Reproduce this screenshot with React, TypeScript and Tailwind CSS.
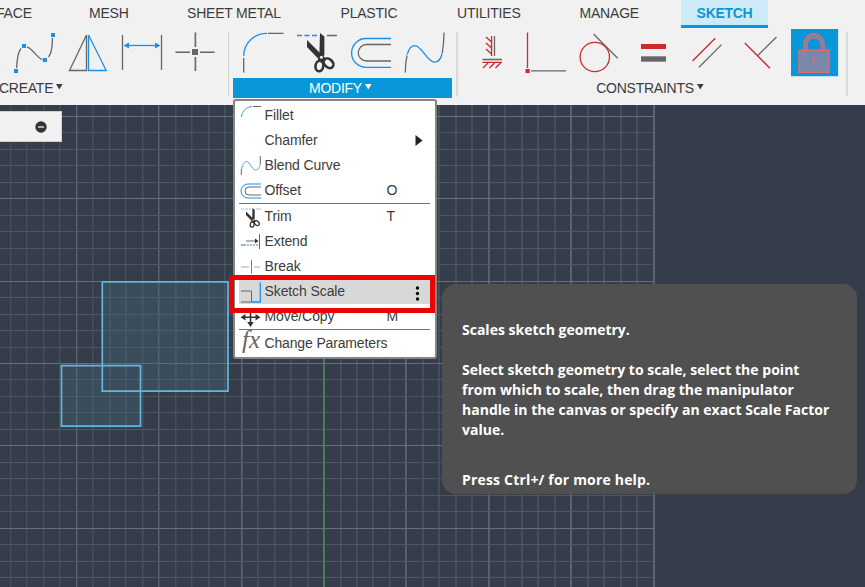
import React, { useState } from 'react';

const TABS = [
  { name: 'FACE', pos: 'w-[73px] -indent-1' },
  { name: 'MESH', pos: 'w-[98px] pl-4' },
  { name: 'SHEET METAL', pos: 'w-[154px] pl-4' },
  { name: 'PLASTIC', pos: 'w-[116px] pl-[15.5px]' },
  { name: 'UTILITIES', pos: 'w-[123px] pl-4' },
  { name: 'MANAGE', pos: 'w-[117px] pl-[15.5px]' },
];

// Every toolbar icon is drawn in toolbar coordinates, x is the left edge of its cell
const ToolIcon = ({ x, w, children }: { x: number; w: number; children: React.ReactNode }) => (
  <svg width={w} height={50} viewBox={`${x} 28 ${w} 50`} fill="none" stroke="#666" strokeWidth="1.3" className="block shrink-0">
    {children}
  </svg>
);

const Scissors = () => (
  <g stroke="none" fill="#333">
    <path d="M320 33L324.4 36.5V55L322 58.5L319.4 55Z" />
    <path d="M307 40L321 54L322.5 58L319 59.5L307 47Z" />
    <path d="M318 57L321.5 54.5L326.5 59L322.5 62.5L318 61.5Z" />
    <circle cx="321.4" cy="57.2" r="1.5" fill="#eee" />
    <g fill="none" stroke="#333" strokeWidth="2.6">
      <ellipse cx="319.4" cy="66" rx="3.9" ry="5.3" transform="rotate(8 319.4 66)" />
      <ellipse cx="328.6" cy="63.3" rx="5.5" ry="4" transform="rotate(45 328.6 63.3)" />
    </g>
  </g>
);

const CreateTools = () => (
  <div className="flex pl-[10px]">
    <ToolIcon x={10} w={50}>
      <path d="M16.6 68C17 60 18 52 21 48.5M27 46.8C33 48.5 37 58.5 42.5 59.6M48.5 57C51.3 54 52.3 47 52.5 38" />
      <path fill="#1b90ea" stroke="none" d="M14 69h4v4h-4zM22 44h4v4h-4zM43 58h4v4h-4zM51 33h4v4h-4z" />
    </ToolIcon>
    <ToolIcon x={60} w={54}>
      <path d="M86.5 35V70.5H69.5L86.5 35" />
      <path stroke="#1b90ea" d="M88.5 35V70.5H106.2L88.5 35" />
    </ToolIcon>
    <ToolIcon x={114} w={56}>
      <path d="M122.5 35V70M161.5 35V70" />
      <path stroke="#1b90ea" d="M126 45.5H158" />
      <path fill="#1b90ea" stroke="none" d="M123.5 45.5L129 42.5V48.5ZM160.5 45.5L155 42.5V48.5Z" />
    </ToolIcon>
    <ToolIcon x={170} w={56}>
      <path d="M195.4 32.5V47M195.4 57V71M175.5 52.3H190M200 52.3H214.5" strokeWidth="1.6" />
      <path fill="#666" stroke="none" d="M192 49h6v6h-6z" />
    </ToolIcon>
  </div>
);

const ModifyTools = () => (
  <div className="flex">
    <ToolIcon x={233} w={56}>
      <path stroke="#1b90ea" d="M243.7 56A23 23 0 0 1 267 33.3" />
      <path d="M243.7 58V72.5M268 33.3H283.5" />
    </ToolIcon>
    <ToolIcon x={289} w={56}>
      <path stroke="#1b90ea" strokeWidth="1.5" d="M297 35.5H302M304.5 35.5H309.5M312 35.5H317" />
      <path strokeWidth="1.5" d="M327 35.5H337" />
      <Scissors />
    </ToolIcon>
    <ToolIcon x={345} w={52}>
      <path stroke="#1b90ea" d="M391 38.5H366A14.4 14.4 0 0 0 366 67.3H391" />
      <path d="M391 44.5H366.5A8.2 8.2 0 0 0 366.5 61H391" />
    </ToolIcon>
    <ToolIcon x={397} w={55}>
      <path d="M405.3 72.5C405.3 66 406 60 407 55.5M442.3 53C443.3 47 443.9 40 444 32.5" />
      <path stroke="#1b90ea" d="M407.2 54.5C409 48 412 45.5 415 45.6C422 46 427 62 434.5 62.2C438.5 62.2 441 58 442.2 53.5" />
    </ToolIcon>
  </div>
);

const ConstraintTools = () => (
  <div className="flex">
    <ToolIcon x={458} w={56}>
      <path stroke="#cc2929" d="M491.6 36V56M486 37L491.5 42M486 43L491.5 48M486 49L491.5 54M482.5 62.4H502M483 68L488 63M489.5 68L494.5 63M495.5 68L500.5 63" />
      <path d="M494.5 36V56M482.5 59.5H502" />
    </ToolIcon>
    <ToolIcon x={514} w={56}>
      <path stroke="#cc2929" d="M527.5 32.5V68" />
      <path fill="#cc2929" stroke="none" d="M525.5 69h4.2v4h-4.2z" />
      <path d="M531 70.8H566" />
    </ToolIcon>
    <ToolIcon x={570} w={56}>
      <circle cx="594.8" cy="57" r="14.7" stroke="#cc2929" />
      <path d="M593.5 34L617.7 58.3" />
    </ToolIcon>
    <ToolIcon x={626} w={56}>
      <path stroke="none" fill="#cc2929" d="M641 44h25v5h-25z" />
      <path stroke="none" fill="#666" d="M641 56.3h25v5.4h-25z" />
    </ToolIcon>
    <ToolIcon x={682} w={54}>
      <path stroke="#cc2929" d="M692.5 61L715.2 38.3" />
      <path d="M699 67.3L721.5 44.6" />
    </ToolIcon>
    <ToolIcon x={736} w={55}>
      <path d="M757.8 55.5L776.5 37" />
      <path stroke="#cc2929" d="M744.8 43L770 68.3" />
    </ToolIcon>
    <ToolIcon x={791} w={48}>
      <path stroke="none" fill="#b9def2" d="M790 29h48.5v48h-48.5z" />
      <path stroke="none" fill="#0a97da" d="M791 29h47v47h-47z" />
      <path stroke="#7a88a8" strokeWidth="2.5" d="M805.2 50V44A8.9 8.9 0 0 1 823 44V50" />
      <path stroke="#e06a6c" d="M804 50V44A10 10 0 0 1 824 44V50M807 50V44.5A7 7 0 0 1 821 44.5V50" />
      <path fill="#7888a9" stroke="#e06a6c" strokeWidth="1.5" d="M799 50.3h30v22h-30zM814 57V64" />
    </ToolIcon>
  </div>
);

const GroupLabel = ({ name }: { name: string }) => (
  <span className="flex items-center gap-[3px] tracking-[-0.25px]">
    {name}
    <svg width="7" height="6" viewBox="0 0 7 6" fill="currentColor" className="-mt-0.5">
      <path d="M0 0H6.6L3.3 5.6Z" />
    </svg>
  </span>
);

const GridCanvas = () => {
  const columns = Array.from({ length: 40 }, (_, i) => i);
  const rows = Array.from({ length: 29 }, (_, i) => i);
  return (
    <svg width="865" height="482" viewBox="0 105 865 482" className="block">
      {columns.map((i) => (
        <rect
          key={i}
          x={Math.floor(10.4 + i * 16.48)}
          y={105}
          width={1.3 + i * 0.018}
          height={482}
          fill={i % 5 === 4 ? '#5b656f' : '#47515c'}
        />
      ))}
      {rows.map((i) => (
        <rect key={i} x={0} y={Math.floor(116.3 + i * 16.48)} width={654} height={1} fill={i % 5 === 0 ? '#65707a' : '#4d5762'} />
      ))}
      <rect x="323" y="105" width="1.6" height="482" fill="#47894f" />
      <path
        fill="#44667a"
        fillOpacity="0.4"
        stroke="#62b7dc"
        strokeWidth="1.7"
        d="M102.3 281.8h125.7v109.4h-125.7zM61.5 365.6h79v60.6h-79z"
      />
    </svg>
  );
};

const MenuIcon = ({ children }: { children?: React.ReactNode }) => (
  <svg width="22" height="24" viewBox="0 0 22 24" fill="none" stroke="#666" strokeWidth="1" className="mr-[3px] shrink-0">
    {children}
  </svg>
);

const MENU = [
  {
    name: 'Fillet',
    icon: (
      <>
        <path stroke="#3fa0e6" d="M2.5 13C3 6.5 7.5 3 13 2.5" />
        <path d="M14 2.5H22" />
      </>
    ),
  },
  { name: 'Chamfer', submenu: true },
  {
    name: 'Blend Curve',
    icon: (
      <>
        <path stroke="#4aa5e8" d="M2.6 15C4 9.5 5.5 7.5 7.5 7.5C11 7.5 13 16 16.5 16C19 16 20.5 14 21 10" />
        <path d="M2.3 21V15M21.3 10V2" />
      </>
    ),
  },
  {
    name: 'Offset',
    hotkey: 'O',
    icon: (
      <>
        <path stroke="#1b90ea" d="M22 5H9A7 7 0 0 0 9 19H22" />
        <path d="M22 8H10A4 4 0 0 0 10 16H22" />
      </>
    ),
  },
  {
    name: 'Trim',
    hotkey: 'T',
    separator: true,
    icon: (
      <>
        <path stroke="#8dc6ef" d="M2 4H12" strokeDasharray="3 1" />
        <path stroke="#bbb" d="M17 4H22" />
        <g transform="translate(-146.5 -13.5) scale(0.5)">
          <Scissors />
        </g>
      </>
    ),
  },
  {
    name: 'Extend',
    icon: (
      <>
        <path d="M2 15H7M7 11H17M20.5 4V19" />
        <path stroke="#1b90ea" d="M8 15H20" strokeDasharray="2 1" />
        <path fill="#333" stroke="none" d="M16 8.5L19.5 11L16 13.5Z" />
      </>
    ),
  },
  {
    name: 'Break',
    icon: (
      <>
        <path stroke="#aaa" d="M2 12H10M15 12H21" />
        <path stroke="#1b90ea" d="M12.5 5V18.5" />
      </>
    ),
  },
  {
    name: 'Sketch Scale',
    active: true,
    icon: (
      <>
        <path d="M2 11H12.5V22H2" />
        <path stroke="#1b90ea" strokeWidth="1.3" d="M13 22H21.3V2.5" />
      </>
    ),
  },
  {
    name: 'Move/Copy',
    hotkey: 'M',
    icon: (
      <>
        <path stroke="#333" strokeWidth="1.6" d="M4 12.3H19M11.5 4V20" />
        <path fill="#333" stroke="none" d="M1.5 12.3L6.5 9V15.6ZM21.5 12.3L16.5 9V15.6ZM11.5 22L8.2 17H14.8ZM11.5 2.5L8.2 7.5H14.8Z" />
      </>
    ),
  },
];

const ModifyMenu = ({ active, onSelect }: { active: string; onSelect: (name: string) => void }) => (
  <div className="absolute left-[233px] top-[99px] flex h-[260px] w-[204px] flex-col rounded-[3px] border-2 border-[#858585] bg-white pl-1 pr-[5px] pt-[2px] tracking-[-0.1px]">
    {MENU.map((item) => (
      <React.Fragment key={item.name}>
        {item.separator && <hr className="border-[#777]" />}
        <button
          onClick={() => onSelect(item.name)}
          className={`flex h-[25px] w-[191px] shrink-0 items-center text-left ${active === item.name ? 'bg-[#d8d8d8]' : ''}`}
        >
          <MenuIcon>{item.icon}</MenuIcon>
          <span className="w-[122.5px] shrink-0 pl-[0.5px]">{item.name}</span>
          {item.hotkey && <span>{item.hotkey}</span>}
          {item.submenu && (
            <svg width="8" height="11" viewBox="0 0 8 11" fill="#222" className="-mt-px ml-[28.5px]">
              <path d="M0.5 0L7.5 5.5L0.5 11Z" />
            </svg>
          )}
          {active === item.name && (
            <svg width="5" height="15" viewBox="0 0 5 15" fill="#000" className="ml-[28.5px] mt-1">
              <circle cx="2.5" cy="2" r="1.7" />
              <circle cx="2.5" cy="7.5" r="1.7" />
              <circle cx="2.5" cy="13" r="1.7" />
            </svg>
          )}
        </button>
      </React.Fragment>
    ))}
    <hr className="border-[#777]" />
    <button className="flex h-[26px] items-center whitespace-nowrap text-left">
      <span className="-mt-1.5 w-[25px] shrink-0 pl-[3px] font-['Liberation_Serif',serif] text-[25px] italic leading-[20px] tracking-normal text-[#666]">fx</span>
      <span className="pl-[0.5px] tracking-[-0.15px]">Change Parameters</span>
    </button>
  </div>
);

const App = () => {
  const [active, setActive] = useState('Sketch Scale');

  return (
    <div className="relative h-[587px] w-[865px] overflow-hidden bg-[#343d49] font-['Liberation_Sans',Arial,sans-serif] text-[14px] text-[#3c3c3c]">
      <header className="h-[105px] bg-[#f1f1f1]">
        <nav className="flex h-7">
          {TABS.map((tab) => (
            <div key={tab.name} className={`flex h-[26px] shrink-0 items-center whitespace-nowrap tracking-[-0.2px] ${tab.pos}`}>
              <span>{tab.name}</span>
            </div>
          ))}
          <div className="flex h-7 w-[87px] items-center justify-center border-b-[3px] border-[#0a97da] bg-[#cdeaf7] pt-px font-bold tracking-[-0.3px] text-[#0a97da]">
            SKETCH
          </div>
        </nav>
        <div className="flex">
          <section className="w-[228px]">
            <CreateTools />
            <div className="-ml-px flex h-5 items-center">
              <GroupLabel name="CREATE" />
            </div>
          </section>
          <div className="mr-1 mt-1 h-16 w-px bg-[#d0d0d0]" />
          <section className="w-[219px]">
            <ModifyTools />
            <div className="flex h-5 items-center justify-center bg-[#0a97da] pr-1 text-white">
              <GroupLabel name="MODIFY" />
            </div>
          </section>
          <div className="ml-1 mt-1 h-16 w-[2px] bg-[#d9d9d9]" />
          <section className="w-[388px]">
            <ConstraintTools />
            <div className="flex h-5 items-center justify-center pr-1">
              <GroupLabel name="CONSTRAINTS" />
            </div>
          </section>
          <div className="mt-1 h-16 w-[2px] bg-[#d9d9d9]" />
        </div>
      </header>

      <GridCanvas />

      {/* collapsed browser panel */}
      <div className="absolute left-0 top-[111px] flex h-[31px] w-[62px] items-center justify-end border-b border-r border-t border-[#d0d0d0] bg-[#f1f1f1] pr-[14px]">
        <svg width="12" height="12" viewBox="0 0 12 12">
          <circle cx="6" cy="6" r="5.7" fill="#333" />
          <path d="M3 6H9" stroke="#ddd" strokeWidth="1.5" />
        </svg>
      </div>

      <ModifyMenu active={active} onSelect={setActive} />
      <div className="pointer-events-none absolute left-[229px] top-[275px] h-[38px] w-[206px] border-[5px] border-[#eb0404]" />

      <div className="absolute left-[442px] top-[284px] h-[210px] w-[415px] rounded-[14px] bg-[#505050] pl-5 pt-9 font-['Open_Sans','Noto_Sans',sans-serif] text-[14px] font-bold leading-5 text-white">
        <p>Scales sketch geometry.</p>
        <p className="mt-5 whitespace-nowrap tracking-[0.02px]">
          Select sketch geometry to scale, select the point
          <br />
          from which to scale, then drag the manipulator
          <br />
          handle in the canvas or specify an exact Scale Factor
          <br />
          value.
        </p>
        <p className="mt-[30px] tracking-[0.18px]">Press Ctrl+/ for more help.</p>
      </div>
    </div>
  );
};

export default App;
